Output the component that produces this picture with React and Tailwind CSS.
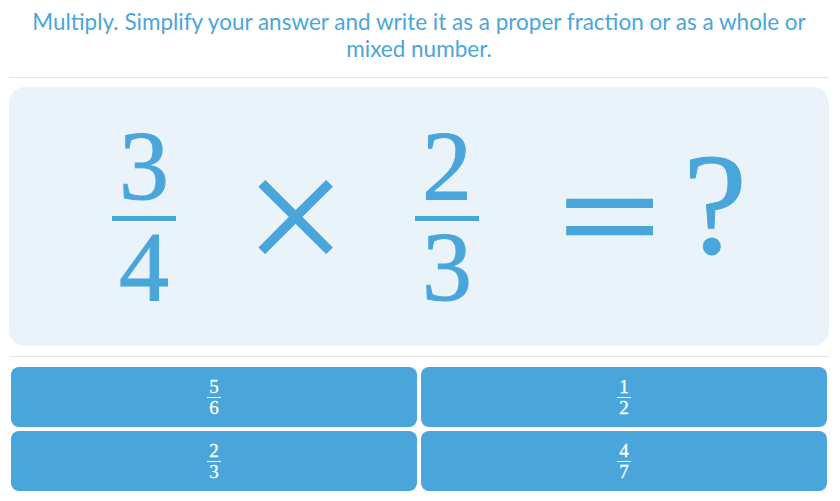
import React from "react";

const serif = "font-['Liberation_Serif','Times_New_Roman',serif]";
const heavy = "[-webkit-text-stroke:1px_#4aa6da]";

function BigFraction({ top, bottom, className = "" }) {
  return (
    <div className={`flex w-[64px] flex-col items-center ${className}`}>
      <span className={`block text-[100px] leading-none ${heavy}`}>{top}</span>
      <span className="block h-[5px] w-full bg-[#4aa6da]" />
      <span className={`-mt-[4px] block text-[100px] leading-none ${heavy}`}>{bottom}</span>
    </div>
  );
}

function SmallFraction({ top, bottom }) {
  return (
    <div className="flex w-[14px] flex-col items-center text-[19px] leading-none [-webkit-text-stroke:0.3px_#ffffff]">
      <span className="block">{top}</span>
      <span className="mt-px block h-px w-full bg-white" />
      <span className="block">{bottom}</span>
    </div>
  );
}

const answers = [
  ["5", "6"],
  ["1", "2"],
  ["2", "3"],
  ["4", "7"],
];

export default function App() {
  return (
    <div className="min-h-[501px] w-full bg-white pl-[9px] pr-[11px]">
      <h1 className="mx-auto w-[800px] pt-[8px] pb-[15px] text-center font-['Lato','Open_Sans',sans-serif] text-[22.5px] leading-[27px] font-normal text-[#4aa6da]">
        Multiply. Simplify your answer and write it as a proper fraction or as a whole or mixed number.
      </h1>

      <div className="h-px w-full bg-[#dfe4ea]" />

      <div className={`mt-[9px] flex h-[259px] items-center rounded-[16px] bg-[#eaf3f9] pl-[103px] text-[#4aa6da] ${serif}`}>
        <BigFraction top="3" bottom="4" />
        <div className="ml-[82px] flex w-[75px] justify-center text-[181px] leading-none [-webkit-text-stroke:0.5px_#4aa6da]">
          ×
        </div>
        <BigFraction top="2" bottom="3" className="ml-[82px]" />
        <div className="ml-[90px] flex w-[81px] scale-y-[0.75] justify-center text-[180px] leading-none [-webkit-text-stroke:3px_#4aa6da]">
          =
        </div>
        <div className={`ml-[41px] flex w-[48px] -translate-y-[12px] justify-center text-[144px] leading-none ${heavy}`}>
          ?
        </div>
      </div>

      <div className="mt-[10px] h-px w-full bg-[#dfe4ea]" />

      <div className={`mt-[10px] grid grid-cols-2 gap-[4px] px-[2px] ${serif}`}>
        {answers.map(([t, b], i) => (
          <button
            key={i}
            className="flex h-[60px] items-center justify-center rounded-[8px] bg-[#4aa6da] text-white"
          >
            <SmallFraction top={t} bottom={b} />
          </button>
        ))}
      </div>
    </div>
  );
}
